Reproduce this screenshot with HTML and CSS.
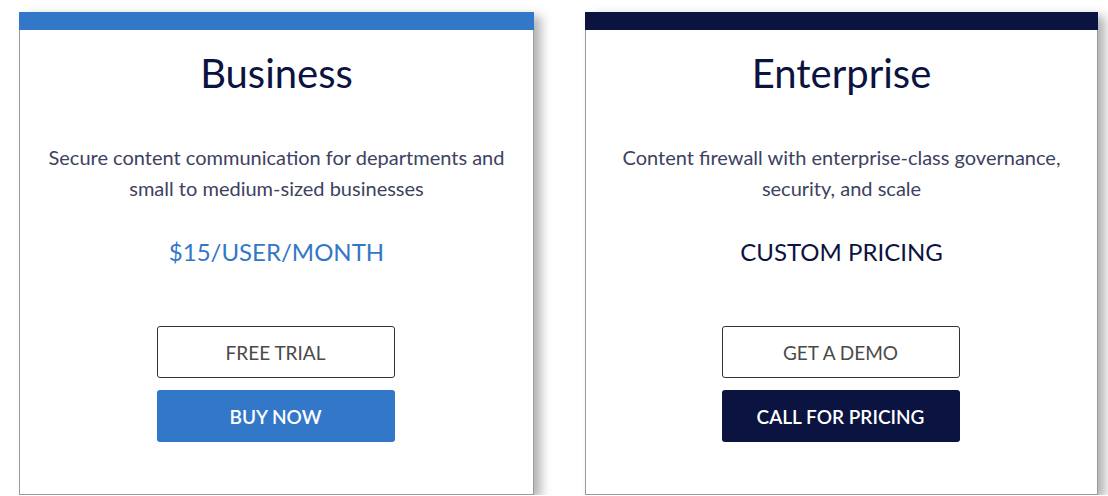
FILE: index.html
```html
<!DOCTYPE html>
<html>
<head>
<meta charset="utf-8">
<link rel="stylesheet" href="styles.css">
</head>
<body>
<div class="plans">
  <div class="card card-business">
    <div class="bar"></div>
    <h2 class="title">Business</h2>
    <p class="desc">Secure content communication for departments and small to medium-sized businesses</p>
    <div class="price">$15/USER/MONTH</div>
    <div class="actions">
      <a class="btn btn-outline">FREE TRIAL</a>
      <a class="btn btn-fill">BUY NOW</a>
    </div>
  </div>
  <div class="card card-enterprise">
    <div class="bar"></div>
    <h2 class="title">Enterprise</h2>
    <p class="desc">Content firewall with enterprise-class governance, security, and scale</p>
    <div class="price">CUSTOM PRICING</div>
    <div class="actions">
      <a class="btn btn-outline">GET A DEMO</a>
      <a class="btn btn-fill">CALL FOR PRICING</a>
    </div>
  </div>
</div>
</body>
</html>
```
FILE: styles.css
```css
html, body {
  margin: 0;
  padding: 0;
  background: #ffffff;
}
body {
  font-family: "Lato", "Open Sans", sans-serif;
  color: #0b1340;
}
.plans {
  display: flex;
  gap: 51px;
  padding: 12px 0 0 19px;
}
.card {
  box-sizing: border-box;
  height: 483px;
  background: #fff;
  border: 1px solid #9a9a9a;
  border-top: none;
  box-shadow: 7px 4px 10px rgba(0, 0, 0, 0.3);
  display: flex;
  flex-direction: column;
  align-items: center;
}
.card-business { width: 515px; --accent: #3377c8; }
.card-enterprise { width: 513px; --accent: #0b1340; }
.bar {
  align-self: stretch;
  height: 18px;
  margin: 0 -1px;
  background: var(--accent);
}
.title {
  margin: 19px 0 0;
  font-size: 40px;
  line-height: 48px;
  font-weight: 400;
  color: #0b1340;
}
.desc {
  margin: 45px 0 0;
  padding: 0 20px;
  font-size: 20px;
  line-height: 31px;
  color: #3d4260;
  text-align: center;
}
.price {
  margin-top: 33px;
  font-size: 24px;
  line-height: 30px;
  color: #0b1340;
}
.card-business .price { color: #3377c8; }
.actions {
  margin-top: 59px;
  margin-right: 2px;
  display: flex;
  flex-direction: column;
  gap: 12px;
}
.btn {
  box-sizing: border-box;
  width: 238px;
  height: 52px;
  border-radius: 3px;
  display: flex;
  align-items: center;
  justify-content: center;
  font-size: 19px;
}
.btn-outline {
  border: 1px solid #333;
  color: #4a4a4a;
  background: #fff;
}
.btn-fill {
  background: var(--accent);
  color: #fff;
  font-weight: 600;
}
```
